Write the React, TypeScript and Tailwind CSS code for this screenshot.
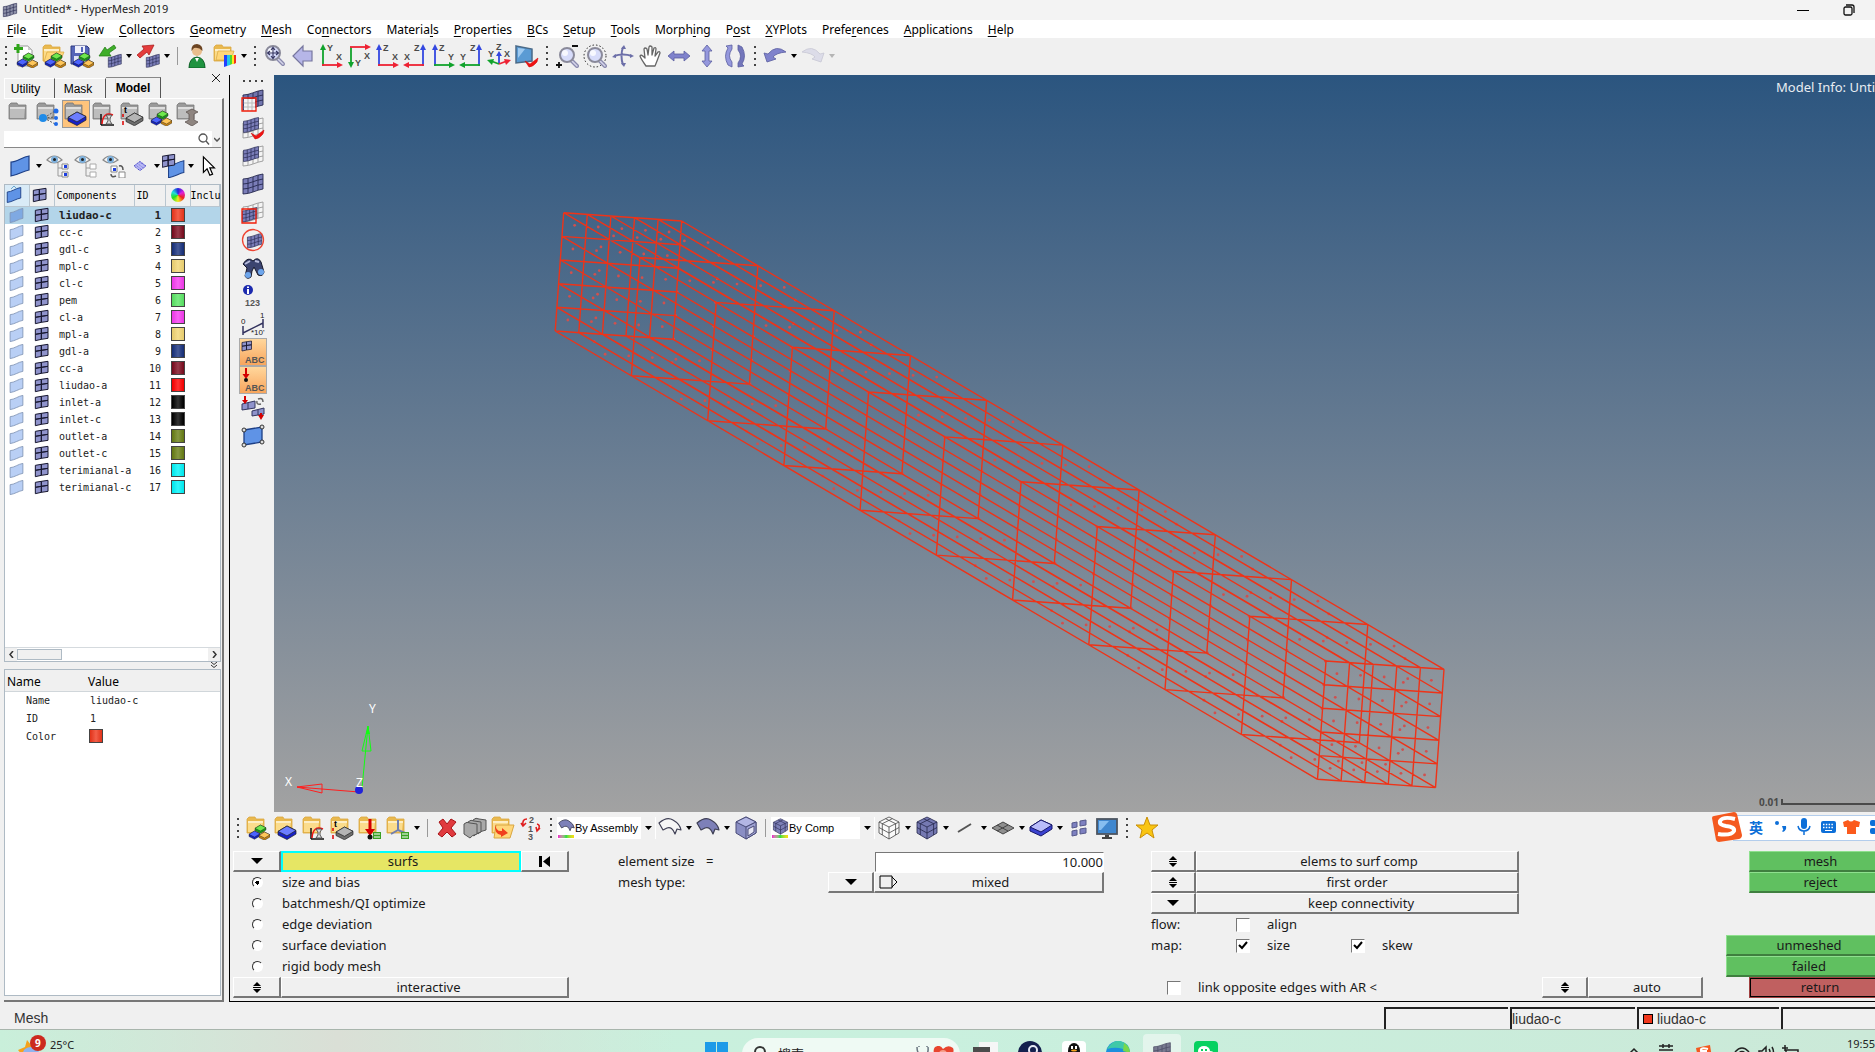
import type { ReactNode } from "react";

const UI = "font-['Noto_Sans','Noto_Sans_CJK_SC',sans-serif]";
const CELL = "font-['DejaVu_Sans_Mono','Liberation_Mono',monospace]";

/* ---------- shared icon parts ---------- */

function Icon({ children, size = 24 }: { children: ReactNode; size?: number }) {
  return (
    <svg width={size} height={size} viewBox="0 0 24 24" fill="none" className="block shrink-0">
      {children}
    </svg>
  );
}

function Folder({ gray = false }: { gray?: boolean }) {
  const back = gray ? "#9a9a9a" : "#e9b94f";
  const front = gray ? "#bdbdbd" : "#fbdc8c";
  return (
    <g>
      <path d="M1 3 L3 1 H9 L10 3 H18 V17 H1 Z" fill={back} stroke={gray ? "#777" : "#d9a640"} strokeWidth=".8" />
      <path d="M2 5 H17 L16 16 H2 Z" fill={front} />
      <path d="M2 5 H17 V7 H2 Z" fill="#fff" opacity=".5" />
    </g>
  );
}

function Block({ x = 0, y = 0, s = 1, top = "#6c7dff", side = "#1720c8" }: { x?: number; y?: number; s?: number; top?: string; side?: string }) {
  return (
    <g transform={`translate(${x} ${y}) scale(${s})`} stroke="#222" strokeWidth=".8" strokeLinejoin="round">
      <path d="M0 6 L10 0 L20 5 V9 L10 15 L0 10 Z" fill={side} />
      <path d="M0 6 L10 0 L20 5 L10 11 Z" fill={top} />
    </g>
  );
}

function Blocks({ y = 0 }: { y?: number }) {
  return (
    <g>
      <Block x={9} y={8 + y} s={0.55} top="#6fe84c" side="#17a017" />
      <Block x={3} y={14 + y} s={0.55} top="#4b63ff" side="#1222c0" />
      <Block x={13} y={15 + y} s={0.55} top="#ffc65a" side="#c98413" />
    </g>
  );
}

const patch = "M2 7 C9 7 14 3 22 2 V17 C15 18 10 22 2 22 Z";
const patchLines = "M2 12 C9 12 14 8 22 7 M2 17 C9 17 14 13 22 12 M7 6 V21 M12 5 V20 M17 3 V18";

function Patch({ fill = "#7a7db8", line = "#26294f", t = "" }: { fill?: string; line?: string; t?: string }) {
  return (
    <g transform={t} stroke={line} strokeWidth=".9">
      <path d={patch} fill={fill} />
      <path d={patchLines} />
    </g>
  );
}

function Sheet({ fill = "#5f93e6", line = "#1d3f86", t = "" }: { fill?: string; line?: string; t?: string }) {
  return <path transform={t} d="M3 8 C9 8 14 3 21 2 V16 C15 17 10 21 3 22 Z" fill={fill} stroke={line} strokeWidth="1.200" />;
}

function Grid4({ t = "" }: { t?: string }) {
  return (
    <g transform={t} stroke="#17172f" strokeWidth="1.500" fill="#8f93cc">
      <path d="M2 5 L11 3.500 V11 L2 12.500 Z M11 3.500 L21 2 V9.500 L11 11 Z M2 12.500 L11 11 V20 L2 22 Z M11 11 L21 9.500 V18.500 L11 20 Z" />
    </g>
  );
}

function RedCheck() {
  return <path d="M10 17 L15 20 L23 14 L22 18 Q18 23 14 23 Z" fill="#f01414" stroke="#c00" strokeWidth=".5" />;
}

type Arm = { d: string; head: string; color: string };
const R = "#ee2233";
const G = "#11a32c";
const B = "#3347e0";

function Triad({ arms, a, b, ax, ay, bx, by }: { arms: Arm[]; a: string; b: string; ax: number; ay: number; bx: number; by: number }) {
  return (
    <Icon>
      {arms.map((m) => (
        <g key={m.d}>
          <path d={m.d} stroke={m.color} strokeWidth="1.800" />
          <path d={m.head} fill={m.color} />
        </g>
      ))}
      <g fontFamily="Liberation Sans, sans-serif" fontWeight="bold" fontSize="9" fill="#4a4a4a">
        <text x={ax} y={ay}>{a}</text>
        <text x={bx} y={by}>{b}</text>
      </g>
    </Icon>
  );
}

const upLeft = (c: string): Arm => ({ d: "M4 22 V5", head: "M4 0 L7 6 H1 Z", color: c });
const upRight = (c: string): Arm => ({ d: "M20 22 V5", head: "M20 0 L23 6 H17 Z", color: c });
const downLeft = (c: string): Arm => ({ d: "M4 3 V18", head: "M4 24 L7 18 H1 Z", color: c });
const rightLow = (c: string): Arm => ({ d: "M3 21 H18", head: "M24 21 L18 18 V24 Z", color: c });
const rightHigh = (c: string): Arm => ({ d: "M3 3 H18", head: "M24 3 L18 0 V6 Z", color: c });
const leftLow = (c: string): Arm => ({ d: "M21 21 H6", head: "M0 21 L6 18 V24 Z", color: c });

function Lens({ x = 0, y = 0 }: { x?: number; y?: number }) {
  return (
    <g transform={`translate(${x} ${y})`}>
      <path d="M14 14 L20 20" stroke="#8a8aae" strokeWidth="4" strokeLinecap="round" />
      <path d="M14 14 L20 20" stroke="#d5d5ea" strokeWidth="1.500" strokeLinecap="round" />
      <circle cx="10" cy="9" r="7" fill="#d7dcfa" stroke="#8a8a9a" strokeWidth="2" />
      <circle cx="8" cy="7" r="3" fill="#fff" opacity=".8" />
    </g>
  );
}

function Cube({ fill, line = "#25264a" }: { fill: string; line?: string }) {
  return (
    <g stroke={line} strokeWidth=".8" strokeLinejoin="round">
      <path d="M12 1 L22 6 V17 L12 23 L2 17 V6 Z" fill={fill} />
      <path d="M2 6 L12 11 L22 6 M12 11 V23 M8.600 2.700 L18.600 7.700 V19 M15.300 2.700 L5.300 7.700 V19 M2 11.500 L12 17 L22 11.500" />
    </g>
  );
}

function Surface({ fill }: { fill: string }) {
  return <path d="M1 7 Q9 0 15 4 Q22 8 23 14 L19 13 L17 18 Q14 10 9 12 L5 14 Z" fill={fill} stroke="#3f4055" strokeWidth="1.200" strokeLinejoin="round" />;
}

function Eye() {
  return (
    <g>
      <path d="M1 6 Q8 -2 16 6 Q8 12 1 6 Z" fill="#f3f3f3" stroke="#8a8a8a" strokeWidth="1.200" />
      <circle cx="8.500" cy="5.500" r="3.500" fill="#7db0dc" />
      <circle cx="8.500" cy="5.500" r="1.500" fill="#222" />
    </g>
  );
}

/* ---------- toolbar building blocks ---------- */

function Tool({ label, children, narrow = false }: { label: string; children: ReactNode; narrow?: boolean }) {
  return (
    <button aria-label={label} className={`flex h-7 shrink-0 items-center justify-center ${narrow ? "w-6" : "w-7"}`}>
      {children}
    </button>
  );
}

function Caret({ faded = false }: { faded?: boolean }) {
  return (
    <button aria-label="More" className="flex h-7 w-[10px] shrink-0 items-center justify-center">
      <svg width="6" height="4" viewBox="0 0 6 4">
        <path d="M0 0 H6 L3 4 Z" fill={faded ? "#b5b5b5" : "#000"} />
      </svg>
    </button>
  );
}

function Grip() {
  return (
    <div className="flex h-7 w-3 shrink-0 flex-col items-center justify-center gap-1">
      {[0, 1, 2, 3].map((i) => (
        <span key={i} className="h-[2px] w-[2px] bg-[#444]" />
      ))}
    </div>
  );
}

function Divider() {
  return (
    <div className="flex h-7 w-[11px] shrink-0 items-center justify-center">
      <span className="h-[18px] w-px bg-[#999]" />
    </div>
  );
}

/* ---------- title and menus ---------- */

// [before, underlined letter, after]
const menus = [
  ["", "F", "ile"], ["", "E", "dit"], ["", "V", "iew"], ["", "C", "ollectors"], ["", "G", "eometry"],
  ["", "M", "esh"], ["Co", "n", "nectors"], ["Materia", "l", "s"], ["", "P", "roperties"], ["", "B", "Cs"],
  ["", "S", "etup"], ["", "T", "ools"], ["Morph", "i", "ng"], ["P", "o", "st"], ["", "X", "YPlots"],
  ["Prefe", "r", "ences"], ["", "A", "pplications"], ["", "H", "elp"],
];

function TitleBar() {
  return (
    <header>
      <div className="flex h-5 items-center bg-[#f3f3f3] pl-[2px] text-[11px] text-[#222]">
        <Icon size={16}><Patch fill="#8d90a8" /></Icon>
        <h1 className="ml-[6px] pb-[2px]">Untitled* - HyperMesh 2019</h1>
        <div className="ml-auto flex items-center gap-[34px] pr-5">
          <button aria-label="Minimize" className="flex h-4 w-[12px] items-center">
            <span className="h-px w-full bg-black" />
          </button>
          <button aria-label="Restore">
            <svg width="12" height="12" viewBox="0 0 12 12" fill="none" stroke="#111" strokeWidth="1.300">
              <rect x="1" y="3" width="8" height="8" rx="1.500" />
              <path d="M3 1 H9 Q11 1 11 3 V9" />
            </svg>
          </button>
        </div>
      </div>
      <nav className="flex h-[18px] items-center gap-[15px] bg-white pt-[2px] pl-[7px] text-xs text-black">
        {menus.map(([pre, key, post]) => (
          <button key={pre + key + post} className="whitespace-nowrap">
            {pre}<span className="underline underline-offset-2">{key}</span>{post}
          </button>
        ))}
      </nav>
    </header>
  );
}

function TopToolbar() {
  return (
    <div className="flex h-[37px] items-center pb-[2px]">
      <Grip />
      <Tool label="New"><Icon><path d="M4 2 H14 L18 6 V22 H4 Z" fill="#fff" stroke="#999" /><path d="M14 2 L18 6 H14 Z" fill="#ccc" /><path d="M4 0 V9 M0 4.500 H9" stroke="#2fa51a" strokeWidth="3" /><Blocks y={1} /></Icon></Tool>
      <Tool label="Open"><Icon><Folder /><path d="M5 8 H22 L18 18 H2 Z" fill="#ffd77a" stroke="#d9a640" strokeWidth=".7" /><Blocks y={1} /></Icon></Tool>
      <Tool label="Save"><Icon><path d="M1 2 H17 L19 4 V20 H1 Z" fill="#5565b8" stroke="#2f3a80" /><path d="M5 2 H15 V9 H5 Z" fill="#eef0fb" /><path d="M4 12 H16 V20 H4 Z" fill="#dfe3f6" /><path d="M11 3 H13 V8 H11 Z" fill="#5565b8" /><Blocks y={1} /></Icon></Tool>
      <Tool label="Import"><Icon><Patch t="translate(9 9) scale(.65)" /><path d="M16 1 L9 6 L7 3 L1 12 L13 12 L11 9 L18 4 Z" fill="#3fae2a" stroke="#1d7a10" strokeWidth=".7" /></Icon></Tool>
      <Caret />
      <Tool label="Export"><Icon><Patch t="translate(9 9) scale(.65)" /><path d="M1 11 L8 5 L6 2 L18 1 L13 11 L11 8 L4 14 Z" fill="#e43c3c" stroke="#a51212" strokeWidth=".7" /></Icon></Tool>
      <Caret />
      <Divider />
      <Tool label="User profiles"><Icon><path d="M4 24 Q4 14 12 13 Q20 14 20 24 Z" fill="#1f9340" stroke="#0c5f25" /><path d="M10 14 L12 18 L14 14 Z" fill="#fff" /><circle cx="12" cy="7" r="5" fill="#e8bd8c" /><path d="M6.500 7 Q6 0 12 0 Q18 1 17.500 7 Q14 3 9 4 Z" fill="#6b4422" /></Icon></Tool>
      <Tool label="Load results"><Icon><Folder /><path d="M5 7 H21 L18 16 H3 Z" fill="#ffd77a" stroke="#d9a640" strokeWidth=".7" /><path d="M11 11 H14 V22 L11 23 Z" fill="#2340ff" /><path d="M14 11 H17 V21 L14 22 Z" fill="#22c6e8" /><path d="M17 11 H19 V20 L17 21 Z" fill="#48d832" /><path d="M19 11 H21 V20 H19 Z" fill="#ffe81e" /><path d="M21 11 H23 V19 L21 20 Z" fill="#f2301e" /></Icon></Tool>
      <Caret />
      <Grip />
      <Tool label="Fit"><Icon><Lens /><path d="M10 4 V14 M5 9 H15 M8 6 L10 3.500 L12 6 M8 12 L10 14.500 L12 12 M7 7 L4.500 9 L7 11 M13 7 L15.500 9 L13 11" stroke="#33335f" strokeWidth="1.100" /></Icon></Tool>
      <Tool label="Previous view"><Icon><path d="M2 12 L12 2 V7 H21 V17 H12 V22 Z" fill="#b6b6e8" stroke="#77779f" strokeWidth="1.200" /></Icon></Tool>
      <Tool label="XY view"><Triad arms={[upLeft(G), rightLow(R)]} a="Y" b="X" ax={8} ay={7} bx={17} by={16} /></Tool>
      <Tool label="XY top view"><Triad arms={[downLeft(G), rightHigh(R)]} a="X" b="Y" ax={17} ay={15} bx={8} by={22} /></Tool>
      <Tool label="XZ view"><Triad arms={[upLeft(B), rightLow(R)]} a="Z" b="X" ax={8} ay={7} bx={17} by={16} /></Tool>
      <Tool label="XZ rear view"><Triad arms={[upRight(B), leftLow(R)]} a="Z" b="X" ax={11} ay={7} bx={1} by={16} /></Tool>
      <Tool label="YZ view"><Triad arms={[upLeft(B), rightLow(G)]} a="Z" b="Y" ax={8} ay={7} bx={17} by={16} /></Tool>
      <Tool label="YZ left view"><Triad arms={[upRight(B), leftLow(G)]} a="Z" b="Y" ax={11} ay={7} bx={1} by={16} /></Tool>
      <Tool label="Isometric view">
        <Icon>
          <path d="M12 19 V9" stroke={B} strokeWidth="1.800" /><path d="M12 7 L15 12 H9 Z" fill={B} />
          <path d="M12 20 L4 17" stroke={G} strokeWidth="1.800" /><path d="M0 16 L7 15 L5 21 Z" fill={G} />
          <path d="M12 20 L20 17" stroke={R} strokeWidth="1.800" /><path d="M24 16 L17 15 L19 21 Z" fill={R} />
          <g fontFamily="Liberation Sans, sans-serif" fontWeight="bold" fontSize="9" fill="#4a4a4a">
            <text x="1" y="13">Y</text><text x="9" y="6">Z</text><text x="17" y="13">X</text>
          </g>
        </Icon>
      </Tool>
      <Tool label="View list"><Icon><path d="M1 2 L17 5 V17 L1 19 Z" fill="#5a9bd4" stroke="#4a6a88" strokeWidth="1.500" /><path d="M3 4 L10 5 L3 14 Z" fill="#9fcaf0" /><RedCheck /></Icon></Tool>
      <Grip />
      <Tool label="Zoom in or out"><Icon><Lens x={2} y={2} /><path d="M17 2 H23 M1 21 H7 M4 18 V24" stroke="#111" strokeWidth="1.800" /></Icon></Tool>
      <Tool label="Circle zoom"><Icon><circle cx="12" cy="12" r="11" stroke="#222" strokeDasharray="1.500 2" /><Lens x={2} y={2} /></Icon></Tool>
      <Tool label="Rotate"><Icon><path d="M12 3 Q9 12 12 21 M3 12 Q12 9 21 12" stroke="#6c6fa8" strokeWidth="2" /><path d="M13 1 L15 5 L10 5 Z M13 23 L10 19 L15 19 Z M1 13 L5 10 V14 Z M23 12 L19 10 V14 Z" fill="#6c6fa8" /></Icon></Tool>
      <Tool label="Pan"><Icon><path d="M7 22 Q2 15 1 12 Q2 10 5 13 L6 14 L5 5 Q6 3 8 5 L9 11 L10 3 Q11 1 13 3 V11 L15 4 Q17 3 17 5 L16 12 L19 8 Q21 7 21 9 L18 17 L16 22 Z" fill="#fff" stroke="#666" strokeWidth="1.300" strokeLinejoin="round" /></Icon></Tool>
      <Tool label="Horizontal pan"><Icon><path d="M1 12 L7 7 V10 H17 V7 L23 12 L17 17 V14 H7 V17 Z" fill="#7f82cc" stroke="#5b5ea0" strokeWidth=".8" /></Icon></Tool>
      <Tool label="Vertical pan"><Icon><path d="M12 1 L17 7 H14 V17 H17 L12 23 L7 17 H10 V7 H7 Z" fill="#9598dd" stroke="#5b5ea0" strokeWidth=".8" /></Icon></Tool>
      <Tool label="Spin"><Icon><path d="M9 1 V5 Q4 12 9 18 V23 L5 21 Q0 12 5 4 L3 2 Z" fill="#9598dd" stroke="#5b5ea0" strokeWidth=".8" /><path d="M15 23 V19 Q20 12 15 6 V1 L19 3 Q24 12 19 20 L21 22 Z" fill="#7376bb" stroke="#5b5ea0" strokeWidth=".8" /></Icon></Tool>
      <Grip />
      <Tool label="Undo"><Icon><path d="M1 9 L4 18 L13 15 L10 13 Q13 9 23 8 Q13 0 5 10 Z" fill="#7f82cc" stroke="#5b5ea0" strokeWidth=".8" /></Icon></Tool>
      <Caret />
      <Tool label="Redo"><Icon><path d="M23 9 L20 18 L11 15 L14 13 Q11 9 1 8 Q11 0 19 10 Z" fill="#dcdce8" stroke="#c8c8d4" strokeWidth=".8" /></Icon></Tool>
      <Caret faded />
    </div>
  );
}

/* ---------- model browser ---------- */

const components = [
  { name: "liudao-c", color: "#f0371c" },
  { name: "cc-c", color: "#7d0a1e" },
  { name: "gdl-c", color: "#17307d" },
  { name: "mpl-c", color: "#f3d774" },
  { name: "cl-c", color: "#f83cf2" },
  { name: "pem", color: "#5be866" },
  { name: "cl-a", color: "#f83cf2" },
  { name: "mpl-a", color: "#f3d774" },
  { name: "gdl-a", color: "#17307d" },
  { name: "cc-a", color: "#7d0a1e" },
  { name: "liudao-a", color: "#ff0000" },
  { name: "inlet-a", color: "#000000" },
  { name: "inlet-c", color: "#000000" },
  { name: "outlet-a", color: "#697f14" },
  { name: "outlet-c", color: "#697f14" },
  { name: "terimianal-a", color: "#00f4fa" },
  { name: "terimianal-c", color: "#00f4fa" },
];

function Swatch({ color }: { color: string }) {
  return (
    <span className="block h-[14px] w-[14px] border border-[#444] bg-linear-to-r from-black/5 via-white/20 to-black/5" style={{ backgroundColor: color }} />
  );
}

function ViewTools() {
  return (
    <div className="flex h-[31px] items-start pl-[2px]">
      <Tool label="Include view"><Icon><Folder gray /></Icon></Tool>
      <Tool label="Connections"><Icon><Folder gray /><path d="M8 16 L19 9 M8 16 L19 15 M8 16 L19 22" stroke="#555" strokeDasharray="2 1.500" /><circle cx="7" cy="16" r="4" fill="#1f8be8" /><circle cx="20" cy="9" r="2.500" fill="#1f6be8" /><circle cx="20" cy="16" r="2" fill="#1f6be8" /><circle cx="20" cy="22" r="2" fill="#1f6be8" /></Icon></Tool>
      <button aria-label="Component view" className="flex h-7 w-7 items-center justify-center border border-[#999] bg-[#ffc47c]">
        <Icon><Folder gray /><Block x={4} y={10} s={0.9} /></Icon>
      </button>
      <Tool label="Material view"><Icon><Folder gray /><path d="M9 23 V12 M9 23 H22" stroke="#111" strokeWidth="1.500" /><path d="M10 22 Q11 9 21 13" stroke="#f01414" strokeWidth="1.500" /><path d="M14 13 H20 L18 16 V19 L20 22 H14 L16 19 V16 Z" fill="#ddd" stroke="#555" /></Icon></Tool>
      <Tool label="Property view"><Icon><Folder gray /><Block x={6} y={11} s={0.85} top="#b5b5b5" side="#6e6e6e" /><path d="M3 12 V15 M3 19 V23" stroke="#d00" strokeWidth="1.500" /><text x="4" y="11" fontFamily="Liberation Sans" fontWeight="bold" fontSize="9" fill="#000">t</text></Icon></Tool>
      <Tool label="Assembly view"><Icon><Folder gray /><Blocks y={1} /></Icon></Tool>
      <Tool label="Beam view"><Icon><Folder gray /><path d="M10 10 L16 7 L22 10 L18 12 V18 L22 20 L16 24 L9 20 L13 18 V12 Z" fill="#8e8580" stroke="#5f5753" strokeWidth=".8" /></Icon></Tool>
    </div>
  );
}

function ShowTools() {
  return (
    <div className="flex h-9 items-center pl-[2px]">
      <Tool label="Geometry"><Icon><Sheet /></Icon></Tool>
      <Caret />
      <Tool label="Show all"><Icon><Eye /><path d="M12 9 V22 H16 M12 14 H16" stroke="#999" /><path d="M16 10 H22 V15 H16 Z M16 18 H22 V23 H16 Z" fill="#fff" stroke="#888" /><path d="M18 11 H21 V14 H18 Z M18 19 H21 V22 H18 Z" fill="#1d3fe0" /></Icon></Tool>
      <Tool label="Hide all"><Icon><Eye /><path d="M12 9 V22 H16 M12 14 H16" stroke="#999" /><path d="M16 10 H22 V15 H16 Z M16 18 H22 V23 H16 Z" fill="#fff" stroke="#aaa" /></Icon></Tool>
      <Tool label="Reverse"><Icon><Eye /><path d="M9 12 H15 V18 H9 Z M17 18 H23 V24 H17 Z" fill="#fff" stroke="#888" /><path d="M11 14 H14 V17 H11 Z" fill="#1d3fe0" /><path d="M17 12 Q21 11 21 16 M9 20 Q9 24 14 22" stroke="#555" strokeWidth="1.500" /></Icon></Tool>
      <Tool label="Element shading" narrow><Icon size={16}><path d="M3 12 L12 5 L21 12 L12 19 Z" fill="#b9b9f4" stroke="#4d4dc8" strokeWidth="1.500" strokeDasharray="2 1" /><path d="M8 8 L17 15 M5 10 L14 17 M11 6 L20 12" stroke="#5c5cd8" strokeDasharray="2 1" /></Icon></Tool>
      <Caret />
      <Tool label="Elements and geometry" narrow><Icon><Sheet t="translate(4 5) scale(.85)" /><Grid4 t="translate(-1 -1) scale(.65)" /></Icon></Tool>
      <Caret />
      <Tool label="Select" narrow><Icon size={22}><path d="M7 2 V19 L11 15 L14 22 L17 21 L14 14 H19 Z" fill="#fff" stroke="#000" strokeWidth="1.300" /></Icon></Tool>
    </div>
  );
}

function ComponentTable() {
  return (
    <table className={`w-full table-fixed border-collapse text-[10px] leading-[15px] text-[#222] ${CELL}`}>
      <colgroup>
        <col className="w-[24px]" /><col className="w-[25px]" /><col className="w-[80px]" />
        <col className="w-[31px]" /><col className="w-[25px]" /><col />
      </colgroup>
      <thead>
        <tr className="h-[21px] bg-[#f0f0f0] text-left text-black *:border-r *:border-b *:border-[#b9c6d0] *:p-0 *:font-normal">
          <th aria-label="Geometry" className="bg-[#d9ebf7] pl-1"><Icon size={18}><Sheet /><path d="M8 4 L12 0 L16 4" stroke="#4a90c0" /></Icon></th>
          <th aria-label="Elements"><div className="pl-[2px]"><Icon size={16}><Grid4 /></Icon></div></th>
          <th><span className="pl-[2px]">Components</span></th>
          <th><span className="pl-[2px]">ID</span></th>
          <th aria-label="Color"><span className="mx-auto block h-[14px] w-[14px] rounded-full bg-[conic-gradient(#22d,#d2d,#e22,#ee2,#2d2,#2dd,#22d)]" /></th>
          <th className="whitespace-nowrap">Inclu</th>
        </tr>
      </thead>
      <tbody>
        {components.map((c, i) => (
          <tr key={c.name} className={i === 0 ? "h-[17px] bg-[#b3d5e9] text-[11px] font-bold *:p-0" : "h-[17px] *:p-0"}>
            <td><div className="pl-[3px]"><Icon size={17}><Sheet fill={i === 0 ? "#7fa9e2" : "#b9cff5"} line="#7f93b5" /></Icon></div></td>
            <td><div className="pl-[5px]"><Icon size={16}><Grid4 /></Icon></div></td>
            <td className="whitespace-nowrap"><span className="pl-[5px]">{c.name}</span></td>
            <td className="text-right"><span className="pr-1">{i + 1}</span></td>
            <td><div className="pl-[6px]"><Swatch color={c.color} /></div></td>
            <td />
          </tr>
        ))}
      </tbody>
    </table>
  );
}

function ModelBrowser() {
  return (
    <aside className="flex w-[229px] shrink-0 flex-col pl-1">
      <div className="flex h-[23px] items-end pr-[9px] font-['Liberation_Sans',Arial,sans-serif] text-xs">
        <button className="h-5 w-[51px] border-t border-r border-l border-t-white border-r-[#555] border-l-white pr-2">Utility</button>
        <button className="h-5 w-[51px] border-t border-r border-t-white border-r-[#555] pr-1">Mask</button>
        <button className="h-[21px] w-[55px] border-t border-r border-t-[#888] border-r-[#555] font-bold">Model</button>
        <button aria-label="Close" className="mb-4 ml-auto">
          <svg width="8" height="8" viewBox="0 0 8 8" stroke="#222"><path d="M0 0 L8 8 M8 0 L0 8" /></svg>
        </button>
      </div>
      <div className="mr-[5px] flex flex-1 flex-col border-t border-r-2 border-b-2 border-t-white border-r-[#777] border-b-[#777] pt-px pr-px pb-1">
        <ViewTools />
        <div className="flex h-[17px] items-center border-b border-[#888] bg-white">
          <input aria-label="Search" className="h-4 min-w-0 flex-1 bg-white outline-none" />
          <svg width="12" height="12" viewBox="0 0 12 12" fill="none" stroke="#555" strokeWidth="1.300"><circle cx="5" cy="5" r="4" /><path d="M8 8 L11 11.500" /></svg>
          <button aria-label="Search options" className="ml-[2px] flex h-4 w-[9px] items-center justify-center bg-[#f0f0f0]">
            <svg width="6" height="5" viewBox="0 0 6 5" fill="none" stroke="#555" strokeWidth="1.500"><path d="M0 1 L3 4 L6 1" /></svg>
          </button>
        </div>
        <ShowTools />
        <div className="flex h-[478px] flex-col border border-[#aebac4] bg-white">
          <ComponentTable />
          <div className="mt-auto flex h-[14px] items-center border-t border-[#d5dade] bg-white">
            <button aria-label="Scroll left" className="flex h-full w-3 items-center justify-center bg-[#f0f0f0]"><svg width="5" height="7" viewBox="0 0 5 7" fill="none" stroke="#333" strokeWidth="1.500"><path d="M4 0 L1 3.500 L4 7" /></svg></button>
            <span className="h-[11px] w-[45px] border border-[#aebac4] bg-[#f0f0f0]" />
            <button aria-label="Scroll right" className="ml-auto flex h-full w-3 items-center justify-center bg-[#f0f0f0]"><svg width="5" height="7" viewBox="0 0 5 7" fill="none" stroke="#333" strokeWidth="1.500"><path d="M1 0 L4 3.500 L1 7" /></svg></button>
          </div>
        </div>
        <div className="flex h-[7px] justify-end pr-1">
          <svg width="6" height="6" viewBox="0 0 6 6" fill="none" stroke="#333"><path d="M0 0 L3 2.500 L6 0 M0 3 L3 5.500 L6 3" /></svg>
        </div>
        <div className="flex-1 border border-[#aebac4] bg-white">
          <table className={`w-full table-fixed border-collapse text-[10px] text-[#222] ${CELL}`}>
            <colgroup><col className="w-[83px]" /><col /></colgroup>
            <thead>
              <tr className={`h-[21px] border-b border-[#d0d6da] bg-[#f0f0f0] text-left text-xs text-black ${UI}`}>
                <th className="p-0 pt-1 pl-[2px] font-normal">Name</th>
                <th className="p-0 pt-1 font-normal">Value</th>
              </tr>
            </thead>
            <tbody className="*:h-[18px]">
              <tr><td className="p-0 pl-[21px]">Name</td><td className="p-0 pl-[2px]">liudao-c</td></tr>
              <tr><td className="p-0 pl-[21px]">ID</td><td className="p-0 pl-[2px]">1</td></tr>
              <tr><td className="p-0 pl-[21px]">Color</td><td className="p-0 pl-[1px]"><Swatch color="#f0371c" /></td></tr>
            </tbody>
          </table>
        </div>
      </div>
    </aside>
  );
}

/* ---------- side toolbar ---------- */

function OnTool({ label, children }: { label: string; children: ReactNode }) {
  return (
    <button aria-label={label} className="flex h-7 w-7 items-center justify-center border border-[#aaa] bg-linear-to-b from-[#ffd79c] to-[#f7a55c]">
      {children}
    </button>
  );
}

function Abc() {
  return <text x="4" y="23" fontFamily="Liberation Sans, sans-serif" fontWeight="bold" fontSize="9" fill="#555">ABC</text>;
}

function SideToolbar() {
  return (
    <div className="flex w-[44px] shrink-0 flex-col items-center pl-[2px]">
      <div className="flex h-[11px] items-center gap-1">
        {[0, 1, 2, 3].map((i) => <span key={i} className="h-[2px] w-[2px] bg-[#444]" />)}
      </div>
      <Tool label="Mask"><Icon><Patch fill="#7175ae" /><path d="M3 11 H14 V23 H3 Z" fill="#f4f4f4" /><path d="M3 15 H14 M3 19 H14 M7 11 V23 M11 11 V23" stroke="#bbb" /><path d="M1 10 H15 V23 H1 Z" stroke="#f01e0a" strokeWidth="1.300" /></Icon></Tool>
      <Tool label="Reverse mask"><Icon><Patch fill="#f4f4f4" line="#999" /><Patch t="translate(1 0) scale(.75)" /><RedCheck /></Icon></Tool>
      <Tool label="Unmask adjacent"><Icon><Patch fill="#f4f4f4" line="#999" /><Patch t="translate(1 1) scale(.75)" /></Icon></Tool>
      <Tool label="Unmask all"><Icon><Patch /></Icon></Tool>
      <Tool label="Mask not shown"><Icon><Patch fill="#f4f4f4" line="#999" /><Patch t="translate(0 6) scale(.72)" /><path d="M1 9 H15 V23 H1 Z" stroke="#f01e0a" strokeWidth="1.300" /></Icon></Tool>
      <Tool label="Spherical clipping"><Icon><Patch t="translate(5 4) scale(.72)" /><circle cx="12" cy="12" r="10.500" stroke="#ee4433" strokeWidth="1.300" /></Icon></Tool>
      <Tool label="Find"><Icon><path d="M2 8 Q7 0 12 5 Q17 0 20 6 L23 16 Q22 21 17 19 L13 11 L11 15 L10 21 Q6 24 4 20 L6 12 Z" fill="#3b4470" stroke="#15182c" /><circle cx="7" cy="19" r="3" fill="#6ea6ec" /><circle cx="20" cy="16" r="3" fill="#6ea6ec" /><path d="M4 8 L9 5 M14 5 L18 6" stroke="#b8bddd" strokeWidth="2" /></Icon></Tool>
      <Tool label="Numbers"><Icon><circle cx="7" cy="6" r="5" fill="#1c2aae" /><path d="M7 5 V10 M7 2.500 V4" stroke="#fff" strokeWidth="2" /><text x="4" y="22" fontFamily="Liberation Sans, sans-serif" fontWeight="bold" fontSize="9" fill="#555">123</text></Icon></Tool>
      <Tool label="Measure"><Icon><path d="M2 21 L22 11 M2 14 V23 M22 7 V16" stroke="#33335f" strokeWidth="1.500" /><g fontFamily="Liberation Sans, sans-serif" fontSize="8" fill="#222"><text x="0" y="12">0</text><text x="19" y="6">1</text><text x="10" y="23">*10'</text></g></Icon></Tool>
      <OnTool label="Element handles"><Icon><Grid4 t="translate(0 0) scale(.5)" /><Abc /></Icon></OnTool>
      <OnTool label="Load handles"><Icon><path d="M5 0 V7" stroke="#d40000" strokeWidth="2" /><path d="M1.500 6 H8.500 L5 11 Z" fill="#d40000" /><circle cx="5" cy="12" r="2" fill="#111" /><Abc /></Icon></OnTool>
      <Tool label="Load vectors"><Icon><path d="M1 8 L14 5 V12 L1 14 Z M11 15 L23 12 V18 L11 20 Z" fill="#8f93cc" stroke="#33365f" /><path d="M7 7 V13 M17 14 V19" stroke="#33365f" /><path d="M4 0 V5 M20 17 V20" stroke="#d40000" strokeWidth="2" /><path d="M1 4 H7 L4 8 Z M17 19 H23 L20 24 Z" fill="#d40000" /><path d="M17 3 Q22 1 22 6 M20 8 Q15 9 16 5" stroke="#666" strokeWidth="1.500" /></Icon></Tool>
      <Tool label="Fixed points"><Icon><path d="M3 6 L21 3 V18 L3 21 Z" fill="#5f93e6" stroke="#1d3f86" strokeWidth="1.300" /><g fill="#ddd" stroke="#333"><circle cx="3" cy="6" r="2" /><circle cx="21" cy="3" r="2" /><circle cx="21" cy="18" r="2" /><circle cx="3" cy="21" r="2" /></g></Icon></Tool>
    </div>
  );
}

/* ---------- graphics area ---------- */

// Projected axes of the duct: u across, v down, s along its length (10 segments).
const ORIGIN = [289.7, 137.7];
const U = [118, 8.3];
const V = [-8.5, 118.3];
const S = [762.3, 448.3];
const N = 5;
const SEGMENTS = 10;

function at(u: number, v: number, s: number) {
  const x = ORIGIN[0] + U[0] * u + V[0] * v + S[0] * s;
  const y = ORIGIN[1] + U[1] * u + V[1] * v + S[1] * s;
  return [x, y];
}

function seg(a: number[], b: number[]) {
  return `M${a[0].toFixed(1)} ${a[1].toFixed(1)}L${b[0].toFixed(1)} ${b[1].toFixed(1)}`;
}

function buildMesh() {
  const lines: string[] = [];
  const dots: number[][] = [];
  for (let i = 0; i <= N; i++) {
    const t = i / N;
    for (const s of [0, 1]) {
      lines.push(seg(at(t, 0, s), at(t, 1, s)), seg(at(0, t, s), at(1, t, s)));
    }
    lines.push(seg(at(t, 0, 0), at(t, 0, 1)), seg(at(t, 1, 0), at(t, 1, 1)));
    if (i > 0 && i < N) {
      lines.push(seg(at(0, t, 0), at(0, t, 1)), seg(at(1, t, 0), at(1, t, 1)));
    }
  }
  for (let k = 1; k < SEGMENTS; k++) {
    const s = k / SEGMENTS;
    lines.push(seg(at(0, 0, s), at(1, 0, s)), seg(at(1, 0, s), at(1, 1, s)));
    lines.push(seg(at(1, 1, s), at(0, 1, s)), seg(at(0, 1, s), at(0, 0, s)));
  }
  for (let i = 0; i < N; i++) {
    const t = (i + 0.5) / N;
    for (let j = 0; j < N; j++) {
      const r = (j + 0.5) / N;
      dots.push(at(t, r, 0), at(t, r, 1));
    }
    for (let k = 0; k < SEGMENTS; k++) {
      const s = (k + 0.5) / SEGMENTS;
      dots.push(at(t, 0, s), at(t, 1, s), at(0, t, s), at(1, t, s));
    }
  }
  return { path: lines.join(""), dots };
}

const mesh = buildMesh();

function Viewport() {
  return (
    <main className="relative min-h-0 flex-1 overflow-hidden bg-linear-to-b from-[#2b557f] to-[#a2a2a2]">
      <svg className="block h-full w-full" aria-label="Mesh">
        <g fill="#d0504e">
          {mesh.dots.map(([x, y], i) => (
            <circle key={i} cx={x} cy={y} r="1.400" />
          ))}
        </g>
        <path d={mesh.path} stroke="#ee3318" strokeWidth="1.400" fill="none" />
      </svg>
      <svg width="120" height="120" viewBox="0 0 120 120" className="absolute bottom-0 left-0" aria-label="Axes">
        <path d="M85 100 L23 95 L48 92 V101 L23 95" stroke="#ff1e1e" fill="none" />
        <path d="M88 96 L94 34 L97 59 H88 L94 34" stroke="#10ff10" fill="none" />
        <path d="M94 34 L96 42 H92 Z" fill="#10ff10" />
        <circle cx="85" cy="98" r="4" fill="#2222d8" />
        <g fontFamily="Noto Sans, sans-serif" fontSize="12" fill="#fff">
          <text x="95" y="21">Y</text><text x="11" y="94">X</text><text x="82" y="95">Z</text>
        </g>
      </svg>
      <div className="absolute top-1 right-0 text-[13px] leading-4 whitespace-nowrap text-[#e8edf2]">Model Info: Unti</div>
      <div className="absolute right-0 bottom-1 flex items-center gap-[2px] text-[10px] leading-3 font-bold text-[#4a4a4a]">
        0.01<span className="h-[6px] w-[94px] border-b-2 border-l-2 border-[#4a4a4a]" />
      </div>
    </main>
  );
}

/* ---------- lower toolbar ---------- */

function ModeSelect({ label, value, width, icon }: { label: string; value: string; width: string; icon: ReactNode }) {
  return (
    <div className={`relative flex h-[22px] shrink-0 items-center bg-white ${width}`}>
      <div className="flex w-[18px] shrink-0 flex-col items-center">
        {icon}
        <span className="h-[3px] w-4 bg-linear-to-r from-[#e0c] via-[#0d4] to-[#fd0]" />
      </div>
      <select aria-label={label} className="h-full min-w-0 flex-1 appearance-none bg-white font-['Liberation_Sans',Arial,sans-serif] text-[11px] text-black">
        <option>{value}</option>
      </select>
      <span className="pointer-events-none absolute top-0 right-px flex h-full w-[14px] items-center justify-center bg-[#f0f0f0]">
        <svg width="7" height="4" viewBox="0 0 7 4"><path d="M0 0 H7 L3.500 4 Z" /></svg>
      </span>
    </div>
  );
}

function ImeBar() {
  return (
    <div className="absolute top-0 right-0 flex h-[30px] w-[164px] items-center overflow-hidden">
      <div className="absolute top-[3px] right-0 left-[22px] h-[26px] border-y border-[#b3cdec] bg-white" />
      <div className="relative flex items-center">
        <svg width="32" height="30" viewBox="0 0 32 30"><path d="M1 6 Q1 4 3 4 L23 0 Q25 0 26 2 L31 23 Q31 26 28 27 L8 30 Q6 30 5 28 Z" fill="#f4591f" /><path d="M24 7 Q12 4 9 9 Q8 13 15 14 Q24 15 23 19 Q20 24 7 22" stroke="#fff" strokeWidth="4" fill="none" /></svg>
        <span className="ml-[6px] font-['Noto_Sans_CJK_SC',sans-serif] text-[14px] leading-4 font-bold text-[#0d6fd8]">英</span>
        <svg width="118" height="20" viewBox="0 0 118 20" fill="#0d6fd8" className="ml-[6px]">
          <circle cx="8" cy="6" r="2" /><path d="M13 9 H17 Q18 13 14 15 L13 14 Q15 13 14 12 Z" />
          <rect x="32" y="1" width="6" height="11" rx="3" /><path d="M29 9 Q30 14 35 14 Q40 14 41 9 M35 14 V18" stroke="#0d6fd8" strokeWidth="1.500" fill="none" />
          <rect x="52" y="4" width="15" height="12" rx="2" /><path d="M54 7.500 H65 M54 10.500 H65" stroke="#fff" strokeWidth="1.500" strokeDasharray="1.500 1.300" /><path d="M56 13.500 H63" stroke="#fff" />
          <path d="M74 5 L79 3 Q82 6 85 3 L91 5 L90 10 H87 V17 H78 V10 H75 Z" fill="#fb5a1c" />
          <rect x="101" y="3" width="6" height="6" rx="2" /><rect x="101" y="11" width="6" height="6" rx="2" />
        </svg>
      </div>
    </div>
  );
}

function LowerToolbar() {
  return (
    <div className="relative flex h-[39px] items-start pt-[2px] pl-[2px]">
      <Grip />
      <Tool label="Assemblies"><Icon><Folder /><Blocks y={1} /></Icon></Tool>
      <Tool label="Components"><Icon><Folder /><Block x={4} y={10} s={0.9} /></Icon></Tool>
      <Tool label="Materials"><Icon><Folder /><path d="M9 23 V12 M9 23 H22" stroke="#111" strokeWidth="1.500" /><path d="M10 22 Q11 9 21 13" stroke="#f01414" strokeWidth="1.500" /><path d="M14 13 H20 L18 16 V19 L20 22 H14 L16 19 V16 Z" fill="#ddd" stroke="#555" /></Icon></Tool>
      <Tool label="Properties"><Icon><Folder /><Block x={6} y={11} s={0.85} top="#b5b5b5" side="#6e6e6e" /><path d="M3 12 V15 M3 19 V23" stroke="#d00" strokeWidth="1.500" /><text x="4" y="11" fontFamily="Liberation Sans" fontWeight="bold" fontSize="9" fill="#000">t</text></Icon></Tool>
      <Tool label="Load collectors"><Icon><Folder /><path d="M12 3 V14" stroke="#d40000" strokeWidth="3" /><path d="M7 13 H17 L12 20 Z" fill="#d40000" /><circle cx="12" cy="21" r="2.500" fill="#111" /><rect x="15" y="16" width="8" height="7" fill="#3aa024" /><path d="M16 18 H22 M16 21 H22" stroke="#fff" /></Icon></Tool>
      <Tool label="System collectors"><Icon><Folder /><path d="M12 4 V14 L5 18 M12 14 L19 17" stroke="#6f7fb0" strokeWidth="2" /><rect x="15" y="16" width="8" height="7" fill="#3aa024" /><path d="M16 18 H22 M16 21 H22" stroke="#fff" /></Icon></Tool>
      <Caret />
      <Divider />
      <Tool label="Delete"><Icon><path d="M4 6 L8 3 L12 8 L16 3 L21 6 L16 12 L21 18 L17 21 L12 16 L7 21 L3 18 L8 12 Z" fill="#e03a3e" stroke="#a81418" strokeLinejoin="round" /></Icon></Tool>
      <Tool label="Organize"><Icon><g fill="#a9a9a9" stroke="#555"><path d="M10 4 Q13 1 16 3 L23 4 V14 Q17 15 15 18 L10 14 Z" /><path d="M5 6 Q8 3 11 5 L18 6 V16 Q13 17 11 20 L5 16 Z" /><path d="M1 8 Q4 5 7 7 L14 8 V18 Q9 19 7 22 L1 18 Z" /></g></Icon></Tool>
      <Tool label="Move to folder"><Icon><Folder /><path d="M5 9 H23 L19 22 H3 Z" fill="#ffd77a" stroke="#d9a640" /><path d="M4 8 Q5 16 11 15 V12 L17 17 L10 21 V19 Q3 18 4 8 Z" fill="#f0401c" /></Icon></Tool>
      <Tool label="Renumber"><Icon><g fontFamily="Liberation Sans, sans-serif" fontWeight="bold" fontSize="9" fill="#555"><text x="10" y="7">2</text><text x="9" y="16">1</text><text x="9" y="24">3</text></g><path d="M8 3 Q3 3 4 9 M2 7 L4 10 L7 7 M18 8 Q22 9 19 14 M21 12 L18 15 L17 11" stroke="#e02020" strokeWidth="1.600" /></Icon></Tool>
      <Grip />
      <div className="mt-[3px]"><ModeSelect label="Geometry color mode" value="By Assembly" width="w-[99px]" icon={<Icon size={17}><Surface fill="#7d80b8" /></Icon>} /></div>
      <Tool label="Wireframe geometry"><Icon><Surface fill="#f7f7f7" /></Icon></Tool>
      <Caret />
      <Tool label="Shaded geometry"><Icon><Surface fill="#7d80b8" /></Icon></Tool>
      <Caret />
      <Tool label="Transparency"><Icon><g stroke="#4a4c78" strokeLinejoin="round"><path d="M12 1 L22 6 V17 L12 23 L2 17 V6 Z" fill="#8a8ec4" /><path d="M2 6 L12 1 L22 6 L12 11 Z" fill="#b3b6e4" /><path d="M12 11 L22 6 V17 L12 23 Z" fill="#a0a3d4" /><path d="M14 13 L20 10 V16 L14 20 Z" fill="#e6e6f4" /></g></Icon></Tool>
      <Divider />
      <div className="mt-[3px]"><ModeSelect label="Element color mode" value="By Comp" width="w-[104px]" icon={<Icon size={17}><Cube fill="#7d80b8" /></Icon>} /></div>
      <Tool label="Wireframe elements"><Icon><Cube fill="#fafafa" line="#444" /></Icon></Tool>
      <Caret />
      <Tool label="Shaded elements"><Icon><Cube fill="#7579b2" /></Icon></Tool>
      <Caret />
      <Tool label="1D elements"><Icon><path d="M5 16 L18 8" stroke="#555" strokeWidth="2" /></Icon></Tool>
      <Caret />
      <Tool label="2D elements"><Icon><path d="M1 12 L12 6 L23 12 L12 18 Z M6 9 L17 15 M17 9 L6 15" fill="#8f8f8f" stroke="#444" /></Icon></Tool>
      <Caret />
      <Tool label="3D elements"><Icon><path d="M1 11 L12 4 L23 9 V13 L12 20 L1 15 Z" fill="#3b42d0" stroke="#17176a" /><path d="M1 11 L12 4 L23 9 L12 16 Z" fill="#b9bcfa" stroke="#17176a" /></Icon></Tool>
      <Caret />
      <Tool label="Shrink"><Icon><path d="M5 7 L10 6 V11 L5 12 Z M13 5 L19 4 V9 L13 10 Z M5 15 L10 14 V19 L5 20 Z M13 13 L19 12 V17 L13 18 Z" fill="#7d80c0" stroke="#55588a" /></Icon></Tool>
      <Tool label="Display options"><Icon><rect x="2" y="3" width="20" height="15" fill="#3f87cf" stroke="#4d5560" strokeWidth="1.800" /><path d="M4 5 H14 L6 14 H4 Z" fill="#85bdf0" /><path d="M10 19 H14 V21 H17 V23 H7 V21 H10 Z" fill="#444" /></Icon></Tool>
      <Grip />
      <Tool label="Favorites"><Icon><path d="M12 1 L15 9 L23 9 L17 14 L19 22 L12 17 L5 22 L7 14 L1 9 L9 9 Z" fill="#f9c513" stroke="#c98f06" /></Icon></Tool>
      <ImeBar />
    </div>
  );
}

/* ---------- automesh panel ---------- */

const bevel = "h-[21px] shrink-0 border-t border-r-2 border-b-2 border-l border-t-white border-r-[#777] border-b-[#777] border-l-white bg-[#f0f0f0] leading-none";
const green = "h-[21px] w-full border-t border-b-2 border-l border-t-[#8ee08e] border-b-[#3f7f3f] border-l-[#8ee08e] bg-[#60c060] leading-none";

function Down({ width, label }: { width: string; label: string }) {
  return (
    <button aria-label={label} className={`${bevel} flex items-center justify-center ${width}`}>
      <svg width="12" height="6" viewBox="0 0 12 6"><path d="M0 0 H12 L6 6 Z" /></svg>
    </button>
  );
}

function Spin({ width, label }: { width: string; label: string }) {
  return (
    <button aria-label={label} className={`${bevel} flex items-center justify-center ${width}`}>
      <svg width="8" height="11" viewBox="0 0 8 11"><path d="M4 0 L8 4 H0 Z M4 11 L0 7 H8 Z M0 5 H8 V6 H0 Z" /></svg>
    </button>
  );
}

function Check({ label, on = false }: { label: string; on?: boolean }) {
  return (
    <label className="relative flex items-center gap-[17px] whitespace-nowrap">
      <input type="checkbox" defaultChecked={on} className="peer h-[14px] w-[14px] appearance-none border border-t-[#777] border-r-white border-b-white border-l-[#777] bg-white" />
      <svg width="10" height="9" viewBox="0 0 10 9" fill="none" className="pointer-events-none absolute left-[2px] hidden peer-checked:block"><path d="M1 4 L4 7 L9 1" stroke="#000" strokeWidth="2" /></svg>
      {label}
    </label>
  );
}

const modes = ["size and bias", "batchmesh/QI optimize", "edge deviation", "surface deviation", "rigid body mesh"];

function MeshPanel() {
  return (
    <section className="flex overflow-hidden border-b border-black pb-[3px] pl-[3px] text-[13px] text-[#1a1a1a]">
      <div className="w-[336px] shrink-0">
        <div className="flex">
          <Down width="w-[48px]" label="Entity type" />
          <button className="h-[21px] flex-1 border-2 border-[#00ffff] bg-[#e6e664] pl-1 leading-none">surfs</button>
          <button aria-label="Reset" className={`${bevel} flex w-[48px] items-center justify-center`}>
            <svg width="12" height="11" viewBox="0 0 12 11"><path d="M0 0 H3 V11 H0 Z M11 0 V11 L4 5.500 Z" /></svg>
          </button>
        </div>
        {modes.map((m, i) => (
          <label key={m} className="flex h-[21px] items-center">
            <span className="flex w-[49px] items-center justify-center">
              <input type="radio" name="mode" defaultChecked={i === 0} className="h-[11px] w-[11px] appearance-none rounded-full border border-t-[#333] border-r-white border-b-white border-l-[#333] bg-white checked:bg-[radial-gradient(#000_2px,#fff_2px)]" />
            </span>
            {m}
          </label>
        ))}
        <div className="flex">
          <Spin width="w-[48px]" label="Meshing mode" />
          <button className={`${bevel} flex-1 pl-2`}>interactive</button>
        </div>
      </div>

      <div className="ml-[49px] w-[486px] shrink-0">
        <div className="flex h-[21px] items-center">
          <label htmlFor="size" className="w-[88px]">element size</label>
          <span>=</span>
          <input id="size" defaultValue="10.000" className="ml-auto h-5 w-[229px] border border-t-[#777] border-r-white border-b-white border-l-[#777] bg-white text-right outline-none" />
        </div>
        <div className="flex h-[21px] items-center">
          <span className="flex-1">mesh type:</span>
          <Down width="w-[46px]" label="Mesh type" />
          <button className={`${bevel} flex w-[230px] items-center pl-1`}>
            <svg width="20" height="14" viewBox="0 0 20 14" fill="none" stroke="#000"><path d="M1 1 H13 V13 H1 Z M13 2 L18 7 L13 12" /></svg>
            <span className="flex-1 pr-5">mixed</span>
          </button>
        </div>
      </div>

      <div className="ml-[47px] w-[552px] shrink-0">
        <div className="flex">
          <Spin width="w-[45px]" label="Destination" />
          <button className={`${bevel} w-[323px] pl-1`}>elems to surf comp</button>
        </div>
        <div className="flex">
          <Spin width="w-[45px]" label="Order" />
          <button className={`${bevel} w-[323px]`}>first order</button>
        </div>
        <div className="flex">
          <Down width="w-[45px]" label="Connectivity" />
          <button className={`${bevel} w-[323px] pl-2`}>keep connectivity</button>
        </div>
        <div className="flex h-[21px] items-center">
          <span className="w-[85px]">flow:</span>
          <Check label="align" />
        </div>
        <div className="flex h-[21px] items-center">
          <span className="w-[85px]">map:</span>
          <span className="w-[115px]"><Check label="size" on /></span>
          <Check label="skew" on />
        </div>
        <div className="h-[21px]" />
        <div className="flex h-[21px] items-center justify-between pl-4">
          <Check label="link opposite edges with AR <" />
          <div className="flex">
            <Spin width="w-[46px]" label="Aspect ratio mode" />
            <button className={`${bevel} w-[115px] pl-1`}>auto</button>
          </div>
        </div>
      </div>

      <div className="-mr-4 ml-auto w-[165px] shrink-0">
        <div className="pl-[23px]">
          <button className={green}>mesh</button>
          <button className={green}>reject</button>
        </div>
        <div className="h-[42px]" />
        <button className={green}>unmeshed</button>
        <button className={green}>failed</button>
        <div className="pl-[23px]">
          <button className="h-[21px] w-full border-2 border-black bg-[#c06060] leading-none outline-1 -outline-offset-1 outline-[#a04040]">return</button>
        </div>
      </div>
    </section>
  );
}

/* ---------- status and task bars ---------- */

const well = "flex h-[22px] shrink-0 items-center border-t-2 border-l-2 border-t-[#222] border-l-[#222] whitespace-nowrap";

function StatusBar() {
  return (
    <footer className="flex h-[27px] items-end justify-between overflow-hidden pl-[14px] font-['Liberation_Sans',Arial,sans-serif] text-[14px] text-[#333]">
      <span className="leading-[22px]">Mesh</span>
      <div className="flex gap-[2px]">
        <div className={`${well} w-[124px]`} />
        <div className={`${well} w-[125px]`}>liudao-c</div>
        <div className={`${well} w-[142px] gap-1 pl-1`}>
          <span className="h-[10px] w-[10px] border border-black bg-[#f0371c]" />
          liudao-c
        </div>
        <div className={`${well} w-[94px]`} />
      </div>
    </footer>
  );
}

function TaskBar() {
  return (
    <div className="flex h-[23px] items-start overflow-hidden border-t border-[#a8b5ac] bg-linear-to-r from-[#c9efda] via-[#c9f0de] to-[#cbe9d8] text-xs text-[#222]">
      <div className="flex h-full flex-1 items-start bg-linear-to-r from-transparent via-[#dadfd6] to-transparent pt-[5px] pl-[18px]">
        <svg width="28" height="24" viewBox="0 0 28 24"><path d="M0 15 L7 12 L9 5 L13 10 L19 12 L14 20 H4 Z" fill="#f5a31c" /><ellipse cx="13" cy="18" rx="8" ry="6" fill="#8fb4ef" /><circle cx="20" cy="8" r="8" fill="#cc2a1e" /><text x="17" y="12" fontFamily="Noto Sans" fontWeight="bold" fontSize="10" fill="#fff">9</text></svg>
        <span className="ml-1 text-[11px] leading-5">25°C</span>
      </div>
      <div className="ml-[30px] flex shrink-0 items-start">
        <button aria-label="Start" className="mt-3">
          <svg width="24" height="24" viewBox="0 0 24 24" fill="#1c9be8"><path d="M0 0 H11 V11 H0 Z M12 0 H23 V11 H12 Z M0 12 H11 V23 H0 Z M12 12 H23 V23 H12 Z" /></svg>
        </button>
        <button className="mt-2 ml-[13px] flex h-8 w-[218px] items-start rounded-full bg-[#effaf4] pt-2 pl-3">
          <svg width="14" height="14" viewBox="0 0 14 14" fill="none" stroke="#333" strokeWidth="2"><circle cx="6" cy="6" r="5" /><path d="M9.500 9.500 L13 13" /></svg>
          <span className="ml-[10px] text-[13px] leading-4">搜索</span>
          <svg width="44" height="20" viewBox="0 0 44 20" className="mr-1 ml-auto" fill="none"><path d="M6 0 H8 M14 0 H16 M5 1 Q5 9 11 10 Q17 9 16 1 M11 10 V18" stroke="#6a7580" strokeWidth="1.500" /><path d="M31 18 Q18 7 23 1 Q28 -2 31 3 Q36 -2 41 2 Q44 8 31 18 Z" fill="#e8452f" /><circle cx="31" cy="8" r="4" fill="#f6a08c" /></svg>
        </button>
        <div className="ml-[13px] flex items-start">
          <svg width="25" height="24" viewBox="0 0 25 24" className="mt-3"><path d="M6 0 H25 V16 H6 Z" fill="#f6f6f6" /><path d="M0 5 H17 V20 H0 Z" fill="#4b4b4b" /></svg>
          <svg width="24" height="24" viewBox="0 0 24 24" className="mt-[11px] ml-5"><circle cx="12" cy="12" r="12" fill="#14204e" /><circle cx="15" cy="9" r="4" fill="#14204e" stroke="#e6e9f5" strokeWidth="2" /><path d="M2 14 L9 16 L12 12" stroke="#e6e9f5" strokeWidth="4" fill="none" /></svg>
          <svg width="24" height="24" viewBox="0 0 24 24" className="mt-[11px] ml-5"><rect width="24" height="24" rx="4" fill="#fff" /><ellipse cx="12" cy="10" rx="6" ry="8" fill="#111" /><path d="M9 5 h2 v3 h-2 Z M13 5 h2 v3 h-2 Z" fill="#fff" /><ellipse cx="12" cy="9.500" rx="3" ry="1" fill="#f5a31c" /><path d="M6 11 H18 V14 H6 Z" fill="#e02020" /></svg>
          <svg width="24" height="24" viewBox="0 0 24 24" className="mt-[11px] ml-5"><circle cx="12" cy="12" r="12" fill="#1c8fdd" /><path d="M1 8 Q6 -1 14 0 Q24 2 24 12 Q14 4 1 8 Z" fill="#3fc9a8" /><path d="M18 2 Q24 6 24 12 L17 10 Z" fill="#78d84a" /></svg>
          <div className="mt-1 ml-[13px] flex h-10 w-[38px] items-start justify-center rounded bg-[#e3f5ec] pt-[7px]"><Icon size={20}><Patch fill="#77798f" line="#4c4e66" /></Icon></div>
          <svg width="24" height="24" viewBox="0 0 24 24" className="mt-[11px] ml-[13px]"><rect width="24" height="24" rx="4" fill="#07d160" /><ellipse cx="10" cy="10" rx="6" ry="5" fill="#fff" /><ellipse cx="16" cy="14" rx="5" ry="4" fill="#f3fff8" /><path d="M7 8 h2 v2 h-2 Z M11 8 h2 v2 h-2 Z" fill="#07d160" /></svg>
        </div>
      </div>
      <div className="flex flex-1 items-start justify-end pt-[14px]">
        <svg width="176" height="20" viewBox="0 0 176 20" fill="none" stroke="#222" strokeWidth="1.500">
          <path d="M1 10 L6 5 L11 10" />
          <path d="M31 2 H45 M35 0 V4 M41 0 V4 M31 6 H45 M33 9 H43" />
          <path d="M68 4 L82 1 L84 14 H70 Z" fill="#f4591f" stroke="none" /><path d="M80 5 Q72 3 73 7 H79" stroke="#fff" strokeWidth="2" />
          <path d="M107 8 Q114 0 121 8 M110 10 Q114 5 118 10" />
          <path d="M131 7 H134 L138 3 V14 L134 11 H131 Z M141 5 Q143 8 141 11 M144 3 Q147 8 144 13" />
          <path d="M158 6 H170 V14 H158 Z M157 1 V7 M154 4 H160" />
        </svg>
        <span className="-mt-2 ml-[43px] w-7 text-[11px] leading-4">19:55</span>
      </div>
    </div>
  );
}

export default function App() {
  return (
    <div className={`flex h-screen flex-col overflow-hidden bg-[#f0f0f0] ${UI}`}>
      <TitleBar />
      <TopToolbar />
      <div className="flex min-h-0 flex-1">
        <ModelBrowser />
        <div className="flex min-w-0 flex-1 flex-col border-l border-black">
          <div className="flex min-h-0 flex-1">
            <SideToolbar />
            <Viewport />
          </div>
          <LowerToolbar />
          <MeshPanel />
        </div>
      </div>
      <StatusBar />
      <TaskBar />
    </div>
  );
}
